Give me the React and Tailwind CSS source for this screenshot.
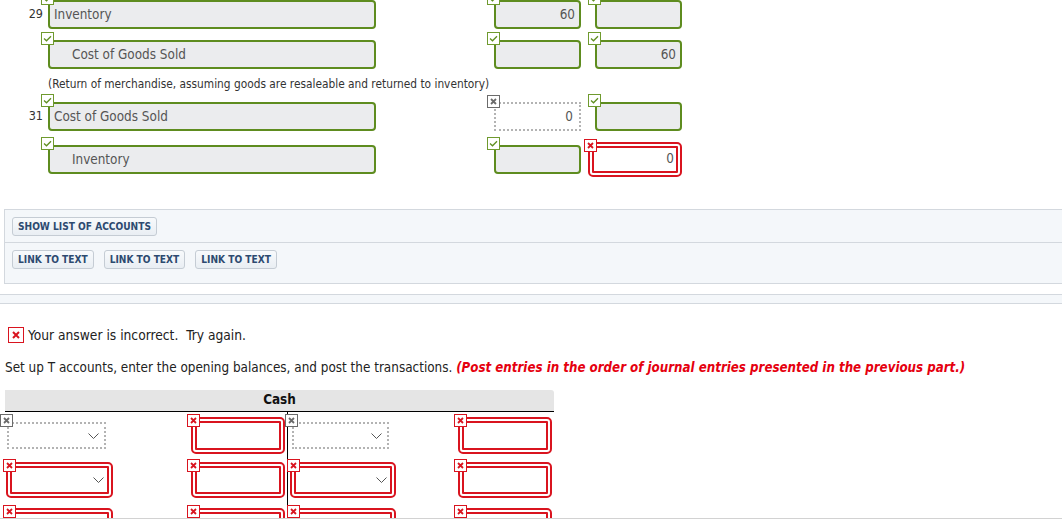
import React from "react";

const FONT = "font-[family-name:'DejaVu_Sans_Condensed','DejaVu_Sans',sans-serif]";

function Check({ kind, className = "" }) {
  if (kind === "green") {
    return (
      <span className={`absolute z-10 w-[13px] h-[13px] bg-white border border-[#6f9a2e] flex items-center justify-center ${className}`}>
        <svg width="9" height="7" viewBox="0 0 9 7">
          <path d="M1 3.5 L3.5 5.8 L8 1.2" fill="none" stroke="#5f8f20" strokeWidth="1.3" />
        </svg>
      </span>
    );
  }
  const col = kind === "red" ? "#d9141f" : "#6b6b6b";
  const border = kind === "red" ? "border-[#d9141f]" : "border-[#6b6b6b]";
  return (
    <span className={`absolute z-10 w-[13px] h-[13px] bg-white border ${border} flex items-center justify-center ${className}`}>
      <svg width="7" height="7" viewBox="0 0 7 7">
        <path d="M1 1 L6 6 M6 1 L1 6" stroke={col} strokeWidth="1.8" />
      </svg>
    </span>
  );
}

function GreenBox({ w, text, indent, align = "left", className = "" }) {
  return (
    <div className={`relative h-[29px] ${w} ${className}`}>
      <Check kind="green" className="-left-[7px] -top-[8px]" />
      <div
        className={`h-full w-full border-2 border-[#5e8c1f] rounded-[4px] bg-[#ebecee] text-[13.4px] text-[#555] leading-[26px] ${
          align === "right" ? "text-right pr-[4px]" : indent ? "pl-[22px]" : "pl-[4px]"
        }`}
      >
        {text}
      </div>
    </div>
  );
}

function DottedBox({ w, text, className = "" }) {
  return (
    <div className={`relative h-[29px] ${w} ${className}`}>
      <Check kind="gray" className="-left-[7px] -top-[7px]" />
      <div className="h-full w-full border-2 border-dotted border-[#b3b3b3] bg-white text-[13.4px] text-[#555] leading-[26px] text-right pr-[6px]">
        {text}
      </div>
    </div>
  );
}

function RedBox({ cls, text, chevron, chk = "-left-[4px] -top-[3px]" }) {
  return (
    <div className={`relative ${cls}`}>
      <Check kind="red" className={chk} />
      <div className="h-full w-full border-[6px] border-double border-[#d9141f] rounded-[5px] bg-white text-[13.4px] text-[#555] text-right pr-[2px] flex items-center justify-end">
        {text}
      </div>
      {chevron && (
        <svg className="absolute right-[9px] top-[15px]" width="11" height="6" viewBox="0 0 11 6">
          <path d="M0.5 0.5 L5.5 5.5 L10.5 0.5" fill="none" stroke="#555" strokeWidth="1" />
        </svg>
      )}
    </div>
  );
}

function DottedSelect({ cls }) {
  return (
    <div className={`relative ${cls}`}>
      <Check kind="gray" className="-left-[7px] -top-[8px]" />
      <div className="h-full w-full border-2 border-dotted border-[#b3b3b3] bg-white" />
      <svg className="absolute right-[7px] top-[11px]" width="11" height="6" viewBox="0 0 11 6">
        <path d="M0.5 0.5 L5.5 5.5 L10.5 0.5" fill="none" stroke="#555" strokeWidth="1" />
      </svg>
    </div>
  );
}

function Btn({ children }) {
  return (
    <div className="h-[19px] px-[5px] border border-[#c5ccd4] rounded-[3px] bg-gradient-to-b from-[#f8fafc] to-[#e9eef3] text-[10.1px] font-bold text-[#2d4a70] leading-[17px] whitespace-nowrap">
      {children}
    </div>
  );
}

function Label({ n }) {
  return <div className="w-[48px] pr-[5px] text-right text-[12.5px] text-[#333] pt-[7px] leading-[14px]">{n}</div>;
}

export default function App() {
  return (
    <div className={`w-[1062px] h-[528px] overflow-hidden bg-white ${FONT}`}>
      <div className="h-[519px] overflow-hidden border-b border-[#d2d2d2]">
        {/* Journal rows */}
        <div className="flex items-start">
          <Label n="29" />
          <GreenBox w="w-[328px]" text="Inventory" />
          <GreenBox w="w-[87px]" text="60" align="right" className="ml-[118px]" />
          <GreenBox w="w-[87px]" text="" className="ml-[14px]" />
        </div>
        <div className="flex items-start mt-[11px]">
          <Label n="" />
          <GreenBox w="w-[328px]" text="Cost of Goods Sold" indent />
          <GreenBox w="w-[87px]" text="" className="ml-[118px]" />
          <GreenBox w="w-[87px]" text="60" align="right" className="ml-[14px]" />
        </div>
        <div className="pl-[48px] h-[33px] text-[11.8px] text-[#333] leading-[14px] pt-[8px]">
          (Return of merchandise, assuming goods are resaleable and returned to inventory)
        </div>
        <div className="flex items-start">
          <Label n="31" />
          <GreenBox w="w-[328px]" text="Cost of Goods Sold" />
          <DottedBox w="w-[87px]" text="0" className="ml-[118px]" />
          <GreenBox w="w-[87px]" text="" className="ml-[14px]" />
        </div>
        <div className="flex items-start mt-[14px]">
          <Label n="" />
          <GreenBox w="w-[328px]" text="Inventory" indent />
          <GreenBox w="w-[87px]" text="" className="ml-[118px]" />
          <RedBox cls="ml-[7px] -mt-[3px] w-[94px] h-[35px]" text="0" chk="-left-[4px] -top-[3px]" />
        </div>

        {/* Panel */}
        <div className="ml-[4px] mt-[32px] border border-r-0 border-[#d3d8de] bg-[#f4f7fa]">
          <div className="h-[33px] pl-[7px] pt-[7px] border-b border-[#d3d8de] flex">
            <Btn>SHOW LIST OF ACCOUNTS</Btn>
          </div>
          <div className="h-[40px] pl-[7px] pt-[7px] flex gap-[10px] text-[9.8px]">
            <Btn>LINK TO TEXT</Btn>
            <Btn>LINK TO TEXT</Btn>
            <Btn>LINK TO TEXT</Btn>
          </div>
        </div>

        {/* band */}
        <div className="mt-[10px] h-[10px] border-y border-[#d3d8de] bg-[#f4f7fa]" />

        {/* feedback */}
        <div className="mt-[23px] ml-[8px] flex items-center gap-[4px] h-[16px]">
          <span className="w-[16px] h-[16px] border border-[#d9141f] bg-white flex items-center justify-center">
            <svg width="8" height="8" viewBox="0 0 8 8">
              <path d="M1 1 L7 7 M7 1 L1 7" stroke="#d9141f" strokeWidth="2" />
            </svg>
          </span>
          <span className="text-[13.7px] text-[#222] whitespace-pre">Your answer is incorrect.  Try again.</span>
        </div>

        <div className="mt-[17px] ml-[5px] text-[13.4px] text-[#222] leading-[16px] whitespace-nowrap">
          Set up T accounts, enter the opening balances, and post the transactions.{" "}
          <span className="text-[#e5000f] italic font-bold text-[13.2px]">
            (Post entries in the order of journal entries presented in the previous part.)
          </span>
        </div>

        {/* T account */}
        <div className="mt-[14px] ml-[5px] w-[549px]">
          <div className="h-[22px] bg-[#e5e5e5] rounded-tr-[3px] border-b border-black text-center font-bold text-[13.4px] text-[#111] leading-[20px]">
            Cash
          </div>
          <div className="grid grid-cols-[282px_267px]">
            <div className="pr-[2px]">
              <div className="h-[45px] flex items-start justify-between">
                <DottedSelect cls="ml-[2px] mt-[10px] w-[99px] h-[27px]" />
                <RedBox cls="mt-[5px] w-[94px] h-[37px]" text="" />
              </div>
              <div className="h-[46px] flex items-start justify-between">
                <RedBox cls="ml-[1px] mt-[5px] w-[107px] h-[36px]" text="" chevron chk="-left-[3px] -top-[3px]" />
                <RedBox cls="mt-[5px] w-[94px] h-[36px]" text="" />
              </div>
              <div className="h-[46px] flex items-start justify-between">
                <RedBox cls="ml-[1px] mt-[5px] w-[107px] h-[36px]" text="" chevron chk="-left-[3px] -top-[3px]" />
                <RedBox cls="mt-[5px] w-[94px] h-[36px]" text="" />
              </div>
            </div>
            <div className="border-l border-black pr-[2px]">
              <div className="h-[45px] flex items-start justify-between">
                <DottedSelect cls="ml-[4px] mt-[10px] w-[97px] h-[27px]" />
                <RedBox cls="mt-[5px] w-[94px] h-[37px]" text="" />
              </div>
              <div className="h-[46px] flex items-start justify-between">
                <RedBox cls="ml-[2px] mt-[5px] w-[106px] h-[36px]" text="" chevron chk="-left-[3px] -top-[3px]" />
                <RedBox cls="mt-[5px] w-[94px] h-[36px]" text="" />
              </div>
              <div className="h-[46px] flex items-start justify-between">
                <RedBox cls="ml-[2px] mt-[5px] w-[106px] h-[36px]" text="" chevron chk="-left-[3px] -top-[3px]" />
                <RedBox cls="mt-[5px] w-[94px] h-[36px]" text="" />
              </div>
            </div>
          </div>
        </div>
      </div>
    </div>
  );
}
